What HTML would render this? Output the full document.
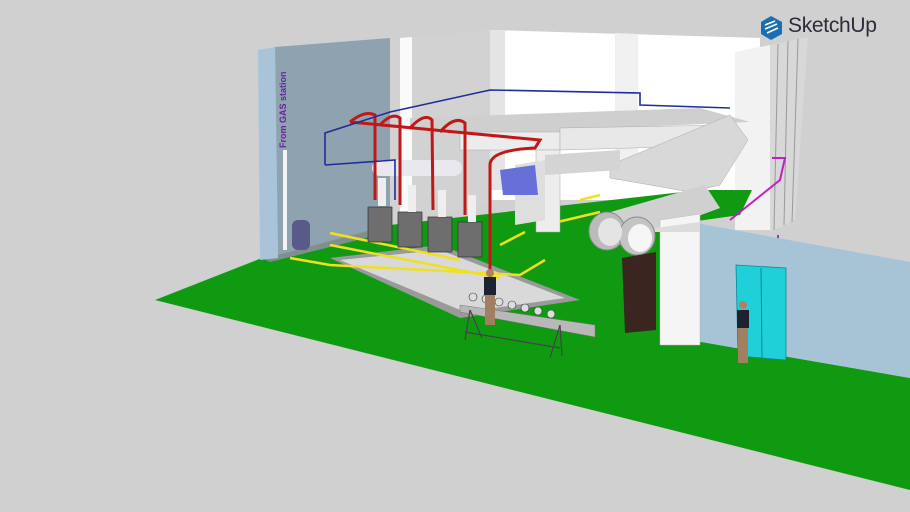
<!DOCTYPE html>
<html><head><style>
html,body{margin:0;padding:0;background:#d0d0d0;width:910px;height:512px;overflow:hidden;font-family:"Liberation Sans",sans-serif}
svg{position:absolute;left:0;top:0}
.logo{position:absolute;left:788px;top:14px;font-size:21px;color:#2c2c3a;letter-spacing:-0.3px}
</style></head><body>
<svg width="910" height="512" viewBox="0 0 910 512">
<polygon points="390,40 490,30 490,205 390,220" fill="#d2d2d2"/>
<polygon points="400,38 412,37 412,215 400,217" fill="#fafafa"/>
<polygon points="490,30 760,38 760,200 490,200" fill="#ffffff"/>
<polygon points="490,30 505,30 505,190 490,190" fill="#e4e4e4"/>
<polygon points="615,33 638,34 638,180 615,180" fill="#f0f0f0"/>
<polygon points="735,52 770,45 770,230 735,230" fill="#f2f2f2"/>
<polygon points="770,45 808,37 795,220 770,232" fill="#d8d8d8"/>
<line x1="778" y1="44" x2="774" y2="230" stroke="#999"/>
<line x1="788" y1="41" x2="784" y2="225" stroke="#999"/>
<line x1="798" y1="39" x2="792" y2="222" stroke="#999"/>
<polygon points="155,300 262,258 390,225 700,190 752,190 740,215 690,222 690,340 910,378 910,490" fill="#0f9a12"/>
<polygon points="262,258 390,225 390,232 270,262" fill="#7f8f8f"/>
<polygon points="258,50 275,47 278,258 260,260" fill="#a9c4d8"/>
<polygon points="275,47 390,38 390,225 278,255" fill="#8fa2b0"/>
<text x="286" y="148" transform="rotate(-90 286 148)" font-size="9" fill="#6a1fa6" font-weight="bold">From GAS station</text>
<rect x="283" y="150" width="4" height="100" fill="#f4f4f4"/>
<polygon points="330,258 440,245 580,300 460,318" fill="#9a9a9a"/>
<polygon points="340,260 440,250 565,298 465,312" fill="#d9d9d9"/>
<g stroke="#f0e020" stroke-width="2.5" fill="none">
<polyline points="290,258 330,265 520,275 545,260"/>
<polyline points="330,233 460,260"/>
<polyline points="330,245 500,278"/>
<polyline points="500,245 525,232"/>
<polyline points="545,225 600,212"/>
<polyline points="580,200 600,195"/>
</g>
<polygon points="410,118 700,108 750,122 560,130 560,150 460,150 460,132 410,130" fill="#cfcfcf"/>
<polygon points="460,150 560,150 560,132 460,132" fill="#ececec" stroke="#aaa" stroke-width="0.5"/>
<polygon points="560,128 730,125 740,145 560,150" fill="#e8e8e8" stroke="#aaa" stroke-width="0.5"/>
<polygon points="610,165 730,115 748,140 720,185 690,192 610,178" fill="#d8d8d8" stroke="#aaa" stroke-width="0.5"/>
<polygon points="536,150 560,150 560,232 536,232" fill="#ededed" stroke="#aaa" stroke-width="0.5"/>
<polygon points="515,165 545,160 545,220 515,225" fill="#dedede"/>
<polygon points="545,155 620,150 620,170 545,175" fill="#d4d4d4"/>
<polygon points="500,170 535,165 538,195 503,195" fill="#6670d8"/>
<polygon points="600,215 705,185 720,208 620,245" fill="#d0d0d0"/>
<ellipse cx="607" cy="231" rx="18" ry="19" fill="#bbb" stroke="#888"/>
<ellipse cx="637" cy="236" rx="18" ry="19" fill="#c4c4c4" stroke="#888"/>
<ellipse cx="640" cy="238" rx="12" ry="14" fill="#f6f6f6"/>
<ellipse cx="610" cy="232" rx="12" ry="14" fill="#e4e4e4"/>
<rect x="372" y="160" width="90" height="16" rx="8" fill="#e8e8ee"/>
<g fill="#6e6e6e" stroke="#333" stroke-width="0.7">
<rect x="368" y="207" width="24" height="35"/>
<rect x="398" y="212" width="24" height="35"/>
<rect x="428" y="217" width="24" height="35"/>
<rect x="458" y="222" width="24" height="35"/>
</g>
<g fill="#eee"><rect x="378" y="178" width="8" height="28"/><rect x="408" y="185" width="8" height="27"/><rect x="438" y="190" width="8" height="27"/><rect x="468" y="195" width="8" height="27"/></g>
<g stroke="#c01818" stroke-width="3" fill="none">
<path d="M350,122 Q365,110 375,115 L375,200"/>
<path d="M380,125 Q392,112 400,118 L400,205"/>
<path d="M410,128 Q425,112 432,120 L433,210"/>
<path d="M440,132 Q455,115 465,123 L465,215"/>
<path d="M350,122 L540,140 L535,148 Q490,150 490,165 L490,300"/>
</g>
<g stroke="#1f2d9a" stroke-width="1.6" fill="none">
<path d="M325,165 L325,133 L390,112 L490,90 L640,93 L640,105 L730,108"/>
<path d="M325,165 L395,160 L395,200"/>
</g>
<path d="M730,220 L780,180 L785,158 L772,158" stroke="#c020c0" stroke-width="2" fill="none"/>
<path d="M778,235 L778,265" stroke="#c020c0" stroke-width="2"/>
<rect x="292" y="220" width="18" height="30" rx="6" fill="#5a5a88"/>
<polygon points="690,222 910,262 910,378 690,340" fill="#a7c3d6"/>
<polygon points="660,220 700,214 700,345 660,345" fill="#f5f5f5" stroke="#bbb" stroke-width="0.5"/>
<polygon points="655,228 700,222 700,232 655,232" fill="#dcdcdc"/>
<polygon points="622,258 656,252 656,330 625,333" fill="#3a2520"/>
<polygon points="736,265 786,268 786,360 738,356" fill="#20d0d8" stroke="#0a8890" stroke-width="0.8"/>
<line x1="761" y1="268" x2="762" y2="358" stroke="#0a8890"/>
<polygon points="460,305 595,325 595,337 460,312" fill="#b8b8b8" stroke="#777" stroke-width="0.5"/>
<g stroke="#444" stroke-width="1.2"><line x1="470" y1="310" x2="465" y2="340"/><line x1="470" y1="310" x2="482" y2="338"/><line x1="560" y1="325" x2="550" y2="358"/><line x1="560" y1="325" x2="562" y2="356"/><line x1="465" y1="332" x2="560" y2="348"/></g>
<g fill="#ddd" stroke="#333" stroke-width="0.6"><circle cx="473" cy="297" r="4"/><circle cx="486" cy="299" r="4"/><circle cx="499" cy="302" r="4"/><circle cx="512" cy="305" r="4"/><circle cx="525" cy="308" r="4"/><circle cx="538" cy="311" r="4"/><circle cx="551" cy="314" r="4"/></g>
<g fill="#1d2230"><rect x="484" y="277" width="12" height="18"/><rect x="737" y="310" width="12" height="18"/></g>
<g fill="#a08060"><rect x="485" y="295" width="10" height="30"/><rect x="738" y="328" width="10" height="35"/></g>
<circle cx="490" cy="273" r="4" fill="#b08060"/><circle cx="743" cy="305" r="4" fill="#b08060"/>
<g transform="translate(761,16)"><polygon points="10,0 21,6 21,18 10,24 0,18 0,6" fill="#1a6eb3"/><path d="M4,9 L14,5 M4,13 L16,8 M6,17 L17,12" stroke="#fff" stroke-width="1.6"/></g>
</svg>
<div class="logo">SketchUp</div>
</body></html>
